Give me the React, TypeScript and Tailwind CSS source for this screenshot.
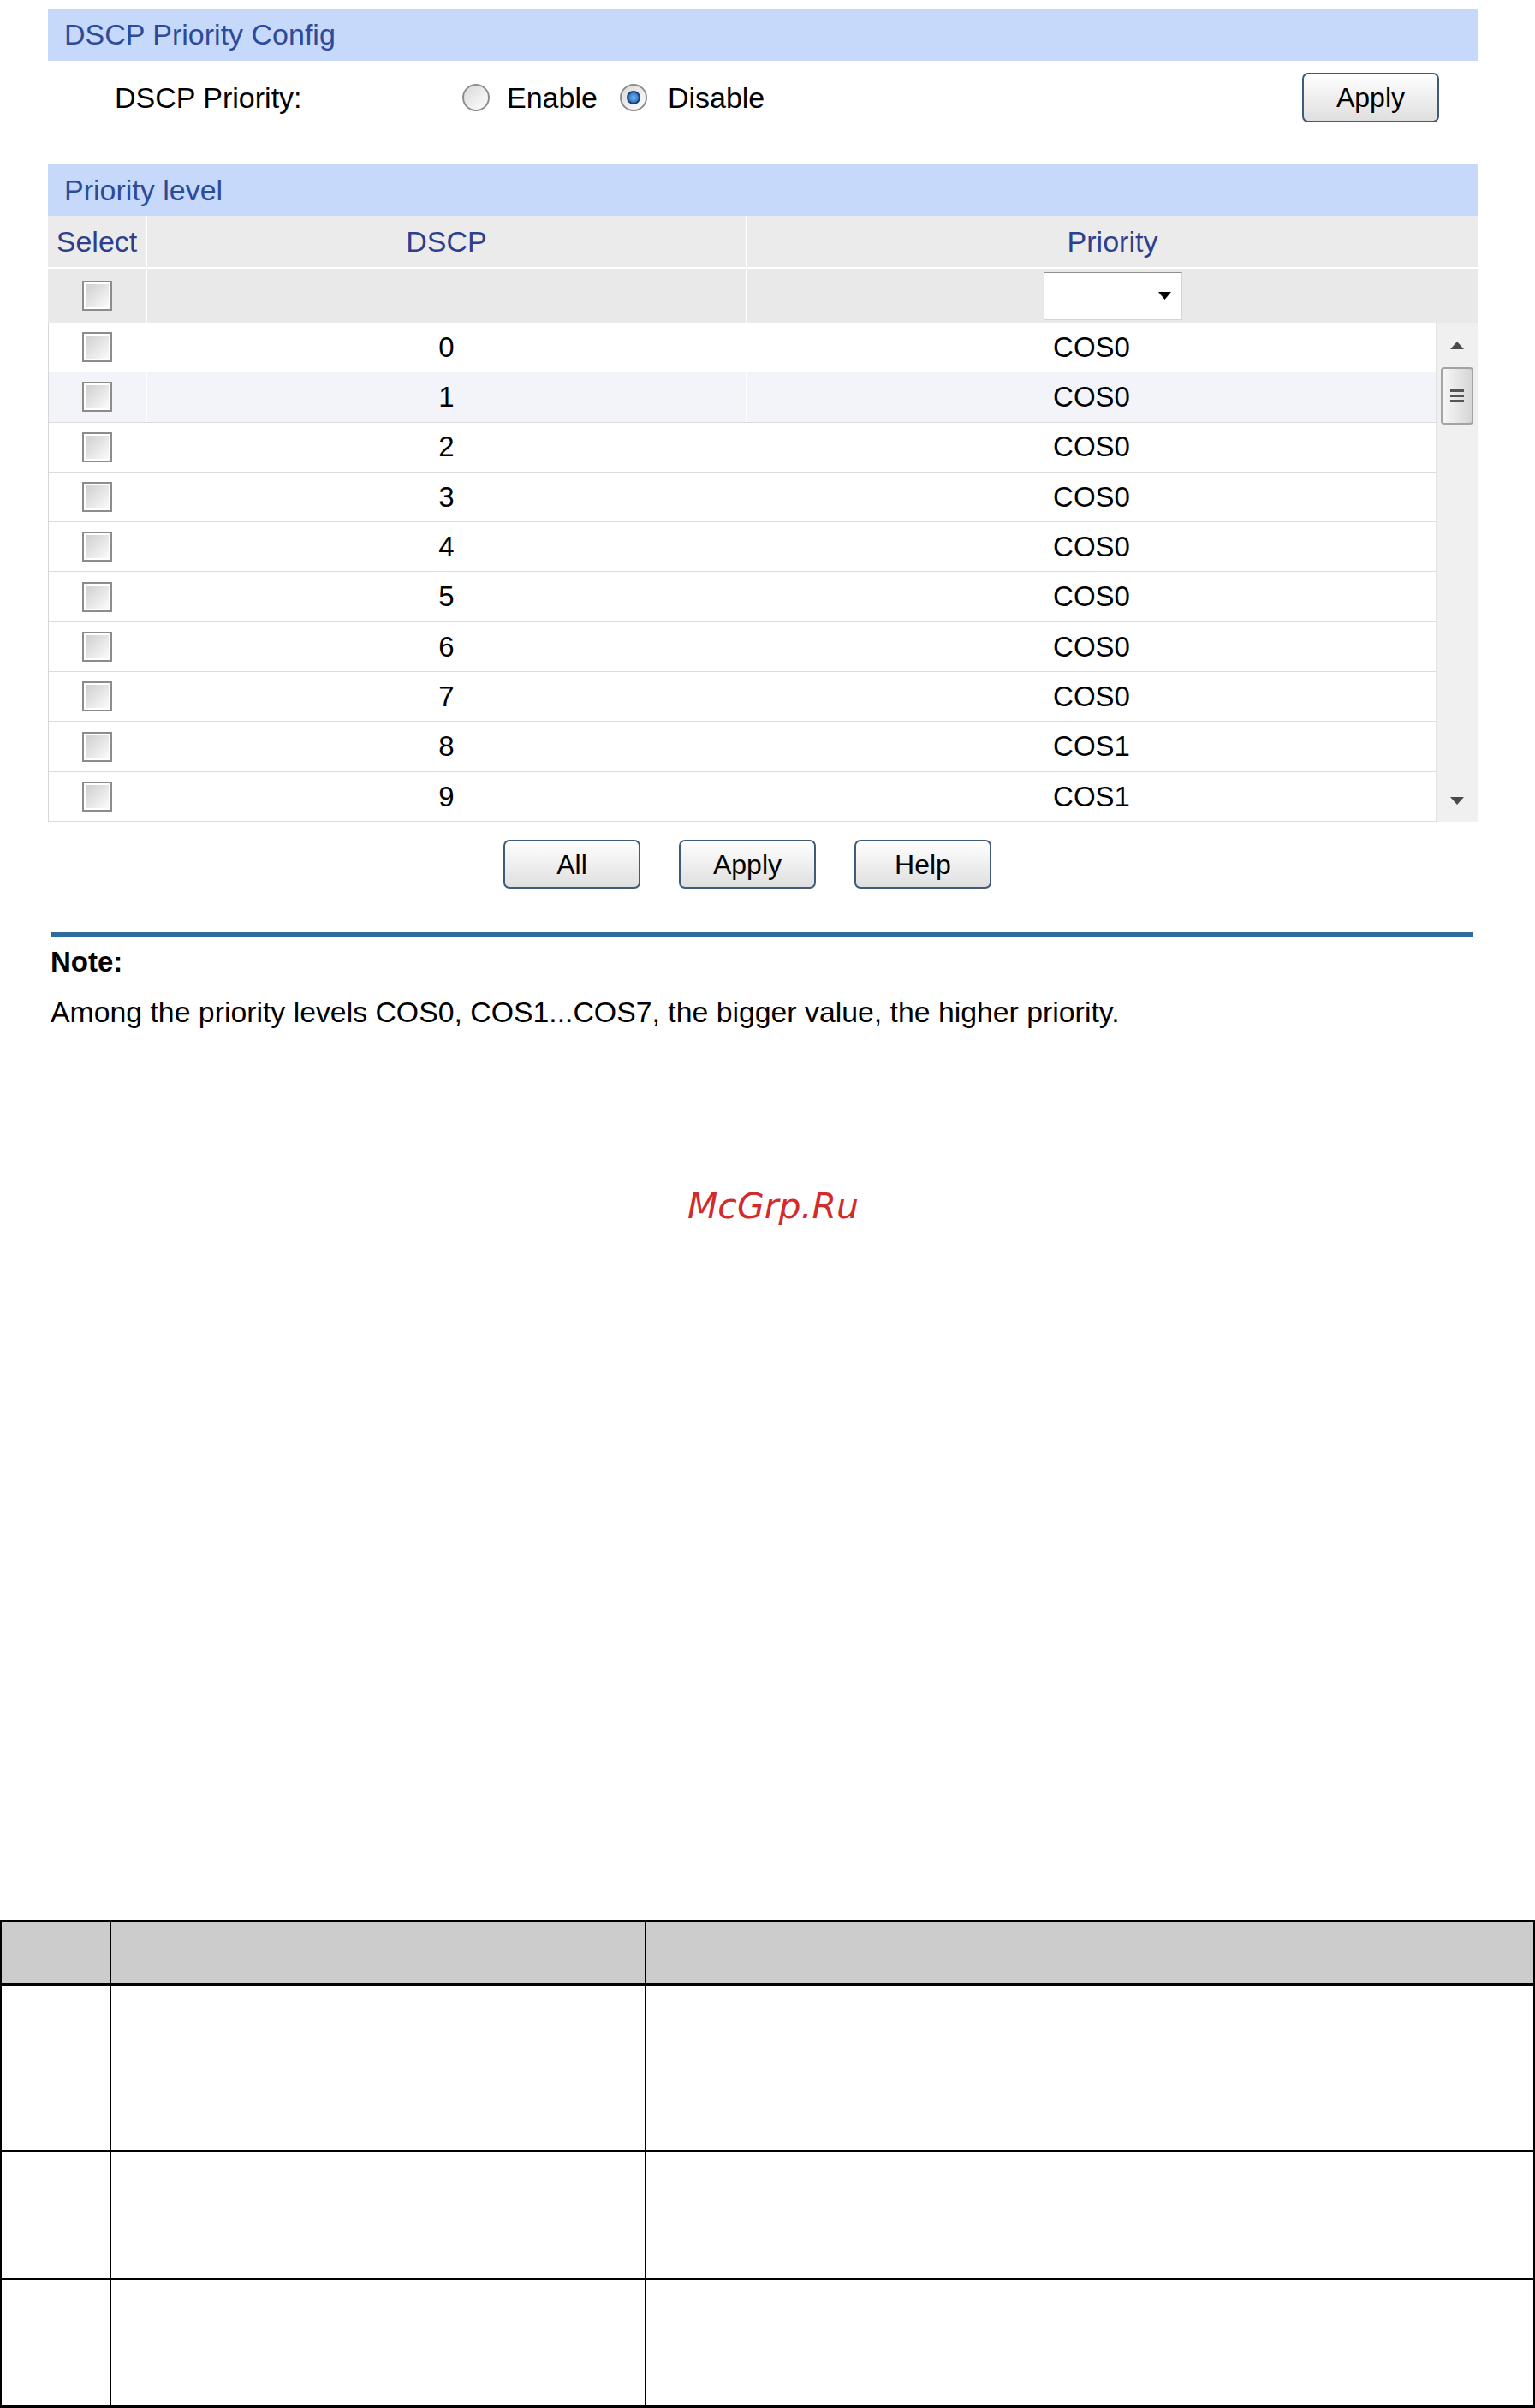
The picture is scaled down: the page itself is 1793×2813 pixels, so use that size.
import React from "react";

const rows = Array.from({ length: 10 }, (_, i) => ({
  dscp: i,
  cos: i < 8 ? "COS0" : "COS1",
}));

function Checkbox() {
  return (
    <div className="w-[35px] h-[35px] border-2 border-[#8c8c8c] bg-white p-[2px]">
      <div className="w-full h-full bg-linear-to-br from-[#cfcfcf] to-[#fbfbfb]" />
    </div>
  );
}

function Radio({ checked }: { checked?: boolean }) {
  return (
    <div className="w-[32px] h-[32px] rounded-full border-2 border-[#8e8e8e] bg-linear-to-br from-[#d9d9d9] to-white flex items-center justify-center">
      {checked && (
        <div className="w-[16px] h-[16px] rounded-full border-2 border-[#1e3f73] bg-radial from-[#6fb6f0] to-[#125fb0]" />
      )}
    </div>
  );
}

function Btn({ label }: { label: string }) {
  return (
    <button className="w-[160px] h-[57px] rounded-[7px] border-2 border-[#3f5b78] bg-linear-to-b from-white to-[#dfdfdf] text-[32px] text-black">
      {label}
    </button>
  );
}

function Scrollbar() {
  return (
    <div className="w-[49px] h-full bg-[#f0f0f0] border-l border-[#e2e2e2] flex flex-col">
      <div className="h-[52px] flex items-center justify-center">
        <svg width="16" height="9" viewBox="0 0 16 9">
          <polygon points="8,0 16,9 0,9" fill="#4a4a4a" />
        </svg>
      </div>
      <div className="mx-[5px] h-[67px] rounded-[4px] border-2 border-[#a3a3a3] bg-linear-to-r from-[#f7f7f7] to-[#d6d6d6] flex flex-col items-center justify-center gap-[3px]">
        <div className="w-[16px] h-[3px] bg-[#555]" />
        <div className="w-[16px] h-[3px] bg-[#555]" />
        <div className="w-[16px] h-[3px] bg-[#555]" />
      </div>
      <div className="flex-1" />
      <div className="h-[50px] flex items-center justify-center">
        <svg width="16" height="9" viewBox="0 0 16 9">
          <polygon points="0,0 16,0 8,9" fill="#4a4a4a" />
        </svg>
      </div>
    </div>
  );
}

export default function App() {
  return (
    <div className="w-[1793px] h-[2813px] bg-white font-['Liberation_Sans',Arial,sans-serif] text-black overflow-hidden">
      <div className="pt-[10px] ml-[56px] w-[1670px]">
        {/* DSCP Priority Config */}
        <div className="h-[61px] bg-[#c6d9fb] pl-[19px] flex items-center text-[34px] text-[#2e4b98]">
          DSCP Priority Config
        </div>
        <div className="pt-[14px] pb-[49px]">
          <div className="h-[58px] flex items-center text-[34px]">
            <span className="ml-[78px] w-[406px]">DSCP Priority:</span>
            <Radio />
            <span className="ml-[20px]">Enable</span>
            <span className="ml-[26px]">
              <Radio checked />
            </span>
            <span className="ml-[24px]">Disable</span>
            <div className="ml-auto mr-[45px]">
              <button className="w-[160px] h-[58px] rounded-[7px] border-2 border-[#3f5b78] bg-linear-to-b from-white to-[#dfdfdf] text-[32px] text-black">
                Apply
              </button>
            </div>
          </div>
        </div>

        {/* Priority level */}
        <div className="h-[60px] bg-[#c6d9fb] pl-[19px] flex items-center text-[34px] text-[#2e4b98]">
          Priority level
        </div>
        <div className="h-[60px] bg-[#ebebeb] flex text-[34px] text-[#2e3f8e]">
          <div className="w-[116px] border-r-2 border-white flex items-center justify-center">Select</div>
          <div className="w-[701px] border-r-2 border-white flex items-center justify-center">DSCP</div>
          <div className="flex-1 flex items-center justify-center">Priority</div>
        </div>
        <div className="h-[65px] bg-[#e9e9e9] border-t-2 border-white flex">
          <div className="w-[116px] border-r-2 border-white flex items-center justify-center">
            <Checkbox />
          </div>
          <div className="w-[701px] border-r-2 border-white" />
          <div className="flex-1 flex items-center justify-center">
            <div className="w-[162px] h-[56px] bg-white border border-[#d4d4d4] border-t-[#8f8f8f] flex items-center justify-end pr-[12px]">
              <svg width="15" height="9" viewBox="0 0 15 9">
                <polygon points="0,0 15,0 7.5,9" fill="#000" />
              </svg>
            </div>
          </div>
        </div>
        <div className="h-[583px] flex">
          <div className="flex-1 border-l border-[#d6d6d6] flex flex-col">
            {rows.map((r) => (
              <div
                key={r.dscp}
                className={`h-[58.3px] flex border-b border-[#dcdcdc] text-[33px] ${
                  r.dscp === 1 ? "bg-[#f2f4f9]" : "bg-white"
                }`}
              >
                <div className="w-[115px] border-r-2 border-white flex items-center justify-center">
                  <Checkbox />
                </div>
                <div className="w-[701px] border-r-2 border-white flex items-center justify-center">{r.dscp}</div>
                <div className="flex-1 flex items-center justify-center">{r.cos}</div>
              </div>
            ))}
          </div>
          <Scrollbar />
        </div>

        <div className="mt-[21px] pl-[532px] flex gap-[45px]">
          <Btn label="All" />
          <Btn label="Apply" />
          <Btn label="Help" />
        </div>

        <div className="mt-[51px] ml-[3px] w-[1662px] h-[6px] bg-[#2f6a9c]" />
        <div className="mt-[10px] ml-[3px] text-[33px] leading-[38px] font-bold">Note:</div>
        <div className="mt-[20px] ml-[3px] text-[33.8px] leading-[38px] whitespace-nowrap">
          Among the priority levels COS0, COS1...COS7, the bigger value, the higher priority.
        </div>
      </div>

      <div className="mt-[184px] pl-[803px] text-[41px] leading-[48px] italic text-[#d22b2b] font-['DejaVu_Sans',sans-serif]">
        McGrp.Ru
      </div>

      {/* bottom parameter table */}
      <div className="mt-[810px] w-[1793px] border-t-2 border-l-2 border-r-2 border-black">
        <div className="h-[75px] flex bg-[#cccccc] border-b-[3px] border-black">
          <div className="w-[128px] border-r-2 border-black" />
          <div className="w-[625px] border-r-2 border-black" />
          <div className="flex-1" />
        </div>
        <div className="h-[194px] flex border-b-2 border-black">
          <div className="w-[128px] border-r-2 border-black" />
          <div className="w-[625px] border-r-2 border-black" />
          <div className="flex-1" />
        </div>
        <div className="h-[150px] flex border-b-[3px] border-black">
          <div className="w-[128px] border-r-2 border-black" />
          <div className="w-[625px] border-r-2 border-black" />
          <div className="flex-1" />
        </div>
        <div className="h-[149px] flex border-b-[3px] border-black">
          <div className="w-[128px] border-r-2 border-black" />
          <div className="w-[625px] border-r-2 border-black" />
          <div className="flex-1" />
        </div>
      </div>
    </div>
  );
}
